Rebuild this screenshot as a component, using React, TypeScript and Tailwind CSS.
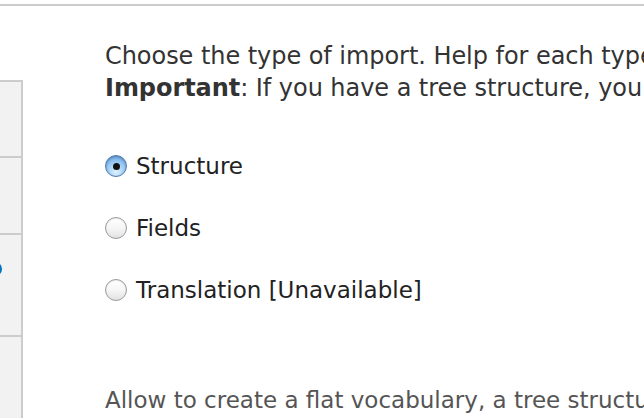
const font = { fontFamily: '"DejaVu Sans", "Liberation Sans", sans-serif' };

function Radio({ checked }: { checked?: boolean }) {
  if (checked) {
    return (
      <span className="flex h-[22px] w-[22px] shrink-0 items-center justify-center rounded-full border border-[#4f79b0] bg-[radial-gradient(circle_at_50%_80%,#e2f3ff_0%,#a5d2f8_40%,#5f9ee0_100%)] shadow-[inset_0_1px_2px_rgba(0,0,0,0.25)]">
        <span className="h-[7px] w-[7px] rounded-full bg-[#111]" />
      </span>
    );
  }
  return (
    <span className="block h-[22px] w-[22px] shrink-0 rounded-full border border-[#9a9a9a] bg-[linear-gradient(#ffffff_0%,#f6f6f6_50%,#e2e2e2_100%)] shadow-[inset_0_1px_1px_rgba(0,0,0,0.08)]" />
  );
}

const options = [
  { label: "Structure", checked: true },
  { label: "Fields" },
  { label: "Translation [Unavailable]" },
];

export default function App() {
  return (
    <div className="h-[418px] w-[644px] overflow-hidden bg-white text-[#333]" style={font}>
      <div className="mt-[4px] border-t-2 border-[#cccccc]" />
      <div className="flex">
        {/* vertical tabs, clipped at the left edge */}
        <div className="mt-[74px] w-[23px] shrink-0 border-r-2 border-t-2 border-[#cccccc] bg-[#f2f2f2]">
          <div className="h-[76px] border-b-2 border-[#cccccc]" />
          <div className="h-[77px] border-b-2 border-[#cccccc]" />
          <div className="flex h-[102px] items-start border-b-2 border-[#cccccc] pt-[27px]">
            <span className="-ml-[12px] h-[14px] w-[14px] rounded-full bg-[#0074bd]" />
          </div>
          <div className="h-[120px]" />
        </div>

        <div className="ml-[82px] min-w-0 flex-1 whitespace-nowrap">
          <div className="mt-[34px] text-[24px] leading-[32px] tracking-[-0.05px]">
            <p>Choose the type of import. Help for each type is available below.</p>
            <p>
              <strong>Important</strong>: If you have a tree structure, you should import it first.
            </p>
          </div>

          <div className="mt-[51px] flex flex-col gap-[40px]">
            {options.map((o) => (
              <label key={o.label} className="flex h-[22px] items-center gap-[9px] text-[23px] text-[#222]">
                <Radio checked={o.checked} />
                <span>{o.label}</span>
              </label>
            ))}
          </div>

          <p className="mt-[83px] text-[23px] leading-[32px] text-[#555]">
            Allow to create a flat vocabulary, a tree structure or a list of terms.
          </p>
        </div>
      </div>
    </div>
  );
}
